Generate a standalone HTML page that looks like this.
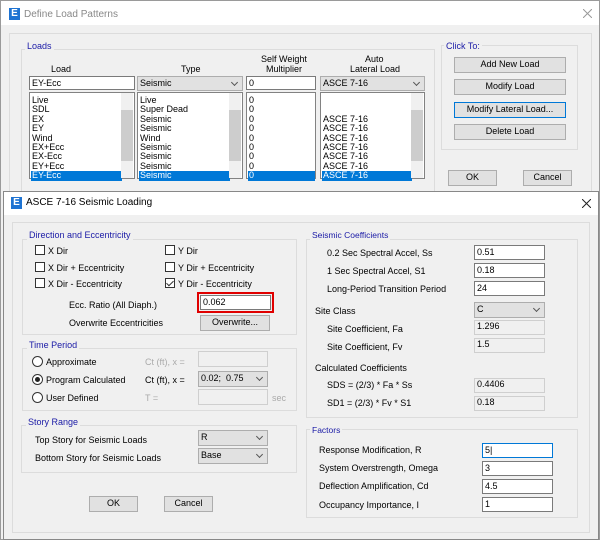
<!DOCTYPE html><html><head><style>
*{box-sizing:border-box;margin:0;padding:0}
body{width:600px;height:540px;overflow:hidden;background:#fff;font-family:"Liberation Sans",Arial,sans-serif;font-size:9px;color:#000;position:relative}
div,span{position:absolute}
svg{position:absolute}
.t{white-space:nowrap;line-height:10px}
.g{border:1px solid #dcdcdc}
.gl{background:#f0f0f0;color:#1a1aa6;padding:0 2px;line-height:10px}
.in{background:#fff;border:1px solid #7a7a7a;line-height:12px;padding-left:2px;white-space:nowrap}
.ro{background:#f0f0f0;border:1px solid #cfcfcf;line-height:10px;padding-left:2px}
.cb{background:#e1e1e1;border:1px solid #adadad;line-height:13px;padding-left:2px;white-space:nowrap}
.cb:after{content:"";position:absolute;right:5px;top:3px;width:4px;height:4px;border-right:1px solid #555;border-bottom:1px solid #555;transform:rotate(45deg)}
.btn{background:#e1e1e1;border:1px solid #adadad;text-align:center;line-height:13px;white-space:nowrap}
.chk{width:10px;height:10px;border:1px solid #333;background:#fff}
.rad{width:11px;height:11px;border:1px solid #333;border-radius:50%;background:#fff}
.lst{background:#fff;border:1px solid #828282}
.lst .t{left:2px;line-height:9.4px;position:relative;display:block}
.sb{width:12px;background:#f0f0f0}
.sel{background:#0078d7;color:#fff}
.icon{width:11px;height:12px;background:#1e73d2;color:#fff;font-weight:bold;font-size:10px;text-align:center;line-height:12px}
</style></head><body>
<div style="left:0;top:0;width:600px;height:540px;border:1px solid #9a9a9a;background:#f0f0f0"></div>
<div style="left:1px;top:1px;width:598px;height:24px;background:#fff"></div>
<div class="icon" style="left:9px;top:8px">E</div>
<div class="t" style="left:24px;top:10px;color:#888;font-size:10px">Define Load Patterns</div>
<svg style="left:583px;top:9px" width="9" height="9"><path d="M0 0L9 9M9 0L0 9" stroke="#999" stroke-width="1"/></svg>
<div class="g" style="left:9px;top:33px;width:583px;height:170px"></div>
<div class="g" style="left:21px;top:49px;width:414px;height:150px"></div>
<div class="t gl" style="left:25px;top:41px">Loads</div>
<div class="t" style="left:51px;top:64px">Load</div>
<div class="t" style="left:181px;top:64px">Type</div>
<div class="t" style="left:261px;top:54px">Self Weight</div>
<div class="t" style="left:266px;top:64px">Multiplier</div>
<div class="t" style="left:365px;top:54px">Auto</div>
<div class="t" style="left:350px;top:64px">Lateral Load</div>
<div class="in" style="left:29px;top:76px;width:106px;height:14px">EY-Ecc</div>
<div class="cb" style="left:137px;top:76px;width:106px;height:15px">Seismic</div>
<div class="in" style="left:246px;top:76px;width:70px;height:14px">0</div>
<div class="cb" style="left:320px;top:76px;width:105px;height:15px">ASCE 7-16</div>
<div class="lst" style="left:29px;top:92px;width:106px;height:87px;padding-top:3px">
<span class="t">Live</span><span class="t">SDL</span><span class="t">EX</span><span class="t">EY</span><span class="t">Wind</span><span class="t">EX+Ecc</span><span class="t">EX-Ecc</span><span class="t">EY+Ecc</span><span class="t sel" style="left:1px;width:91px;padding-left:1px">EY-Ecc</span>
<span class="sb" style="right:1px;top:0;height:85px"><span style="left:0;top:17px;width:12px;height:51px;background:#cdcdcd"></span></span></div>
<div class="lst" style="left:137px;top:92px;width:106px;height:87px;padding-top:3px">
<span class="t">Live</span><span class="t">Super Dead</span><span class="t">Seismic</span><span class="t">Seismic</span><span class="t">Wind</span><span class="t">Seismic</span><span class="t">Seismic</span><span class="t">Seismic</span><span class="t sel" style="left:1px;width:91px;padding-left:1px">Seismic</span>
<span class="sb" style="right:1px;top:0;height:85px"><span style="left:0;top:17px;width:12px;height:51px;background:#cdcdcd"></span></span></div>
<div class="lst" style="left:246px;top:92px;width:70px;height:87px;padding-top:3px">
<span class="t">0</span><span class="t">0</span><span class="t">0</span><span class="t">0</span><span class="t">0</span><span class="t">0</span><span class="t">0</span><span class="t">0</span><span class="t sel" style="left:1px;width:67px;padding-left:1px">0</span></div>
<div class="lst" style="left:320px;top:92px;width:105px;height:87px;padding-top:3px">
<span class="t">&nbsp;</span><span class="t">&nbsp;</span><span class="t">ASCE 7-16</span><span class="t">ASCE 7-16</span><span class="t">ASCE 7-16</span><span class="t">ASCE 7-16</span><span class="t">ASCE 7-16</span><span class="t">ASCE 7-16</span><span class="t sel" style="left:1px;width:90px;padding-left:1px">ASCE 7-16</span>
<span class="sb" style="right:1px;top:0;height:85px"><span style="left:0;top:17px;width:12px;height:51px;background:#cdcdcd"></span></span></div>
<div class="g" style="left:441px;top:45px;width:137px;height:105px"></div>
<div class="t gl" style="left:444px;top:41px">Click To:</div>
<div class="btn" style="left:454px;top:57px;width:112px;height:16px">Add New Load</div>
<div class="btn" style="left:454px;top:79px;width:112px;height:16px">Modify Load</div>
<div class="btn" style="left:454px;top:102px;width:112px;height:16px;border:1px solid #0078d7">Modify Lateral Load...</div>
<div class="btn" style="left:454px;top:124px;width:112px;height:16px">Delete Load</div>
<div class="btn" style="left:448px;top:170px;width:49px;height:16px">OK</div>
<div class="btn" style="left:523px;top:170px;width:49px;height:16px">Cancel</div>

<div style="left:3px;top:191px;width:596px;height:349px;background:#f0f0f0;border:1px solid #888"></div>
<div style="left:4px;top:192px;width:594px;height:23px;background:#fff"></div>
<div class="icon" style="left:11px;top:197px">E</div>
<div class="t" style="left:26px;top:198px;font-size:10px">ASCE 7-16 Seismic Loading</div>
<svg style="left:582px;top:199px" width="9" height="9"><path d="M0 0L9 9M9 0L0 9" stroke="#222" stroke-width="1"/></svg>
<div class="g" style="left:12px;top:222px;width:578px;height:311px"></div>

<div class="g" style="left:22px;top:239px;width:275px;height:96px"></div>
<div class="t gl" style="left:27px;top:230px">Direction and Eccentricity</div>
<div class="chk" style="left:35px;top:245px"></div><div class="t" style="left:48px;top:246px">X Dir</div>
<div class="chk" style="left:35px;top:262px"></div><div class="t" style="left:48px;top:263px">X Dir + Eccentricity</div>
<div class="chk" style="left:35px;top:278px"></div><div class="t" style="left:48px;top:279px">X Dir - Eccentricity</div>
<div class="chk" style="left:165px;top:245px"></div><div class="t" style="left:178px;top:246px">Y Dir</div>
<div class="chk" style="left:165px;top:262px"></div><div class="t" style="left:178px;top:263px">Y Dir + Eccentricity</div>
<div class="chk" style="left:165px;top:278px"><span style="left:2px;top:0;width:4px;height:7px;border-right:1px solid #333;border-bottom:1px solid #333;transform:rotate(45deg)"></span></div><div class="t" style="left:178px;top:279px">Y Dir - Eccentricity</div>
<div class="t" style="left:69px;top:300px">Ecc. Ratio (All Diaph.)</div>
<div style="left:197px;top:292px;width:77px;height:21px;border:2px solid #e00000"></div>
<div class="in" style="left:200px;top:295px;width:71px;height:15px;line-height:13px">0.062</div>
<div class="t" style="left:69px;top:318px">Overwrite Eccentricities</div>
<div class="btn" style="left:200px;top:315px;width:70px;height:16px">Overwrite...</div>

<div class="g" style="left:22px;top:348px;width:275px;height:63px"></div>
<div class="t gl" style="left:27px;top:340px">Time Period</div>
<div class="rad" style="left:32px;top:356px"></div><div class="t" style="left:46px;top:357px">Approximate</div>
<div class="rad" style="left:32px;top:374px"><span style="left:2px;top:2px;width:5px;height:5px;border-radius:50%;background:#222"></span></div><div class="t" style="left:46px;top:375px">Program Calculated</div>
<div class="rad" style="left:32px;top:392px"></div><div class="t" style="left:46px;top:393px">User Defined</div>
<div class="t" style="left:145px;top:357px;color:#aaa">Ct (ft), x =</div>
<div class="t" style="left:145px;top:375px">Ct (ft), x =</div>
<div class="t" style="left:145px;top:393px;color:#aaa">T =</div>
<div class="ro" style="left:198px;top:351px;width:70px;height:16px"></div>
<div class="cb" style="left:198px;top:371px;width:70px;height:16px">0.02;&nbsp; 0.75</div>
<div class="ro" style="left:198px;top:389px;width:70px;height:16px"></div>
<div class="t" style="left:272px;top:393px;color:#aaa">sec</div>

<div class="g" style="left:21px;top:425px;width:276px;height:48px"></div>
<div class="t gl" style="left:26px;top:417px">Story Range</div>
<div class="t" style="left:35px;top:435px">Top Story for Seismic Loads</div>
<div class="cb" style="left:198px;top:430px;width:70px;height:16px">R</div>
<div class="t" style="left:35px;top:453px">Bottom Story for Seismic Loads</div>
<div class="cb" style="left:198px;top:448px;width:70px;height:16px">Base</div>
<div class="btn" style="left:89px;top:496px;width:49px;height:16px">OK</div>
<div class="btn" style="left:164px;top:496px;width:49px;height:16px">Cancel</div>

<div class="g" style="left:306px;top:239px;width:272px;height:179px"></div>
<div class="t gl" style="left:310px;top:230px;font-size:8.5px">Seismic Coefficients</div>
<div class="t" style="left:327px;top:248px">0.2 Sec Spectral Accel, Ss</div>
<div class="in" style="left:474px;top:245px;width:71px;height:15px">0.51</div>
<div class="t" style="left:327px;top:266px">1 Sec Spectral Accel, S1</div>
<div class="in" style="left:474px;top:263px;width:71px;height:15px">0.18</div>
<div class="t" style="left:327px;top:284px">Long-Period Transition Period</div>
<div class="in" style="left:474px;top:281px;width:71px;height:15px">24</div>
<div class="t" style="left:315px;top:306px">Site Class</div>
<div class="cb" style="left:474px;top:302px;width:71px;height:16px">C</div>
<div class="t" style="left:327px;top:324px">Site Coefficient, Fa</div>
<div class="ro" style="left:474px;top:320px;width:71px;height:15px">1.296</div>
<div class="t" style="left:327px;top:342px">Site Coefficient, Fv</div>
<div class="ro" style="left:474px;top:338px;width:71px;height:15px">1.5</div>
<div class="t" style="left:315px;top:363px">Calculated Coefficients</div>
<div class="t" style="left:327px;top:380px">SDS = (2/3) * Fa * Ss</div>
<div class="ro" style="left:474px;top:378px;width:71px;height:15px">0.4406</div>
<div class="t" style="left:327px;top:398px">SD1 = (2/3) * Fv * S1</div>
<div class="ro" style="left:474px;top:396px;width:71px;height:15px">0.18</div>

<div class="g" style="left:306px;top:429px;width:272px;height:89px"></div>
<div class="t gl" style="left:310px;top:425px;font-size:8.5px">Factors</div>
<div class="t" style="left:319px;top:445px">Response Modification, R</div>
<div class="in" style="left:482px;top:443px;width:71px;height:15px;border-color:#0078d7">5|</div>
<div class="t" style="left:319px;top:463px">System Overstrength, Omega</div>
<div class="in" style="left:482px;top:461px;width:71px;height:15px">3</div>
<div class="t" style="left:319px;top:481px">Deflection Amplification, Cd</div>
<div class="in" style="left:482px;top:479px;width:71px;height:15px">4.5</div>
<div class="t" style="left:319px;top:500px">Occupancy Importance, I</div>
<div class="in" style="left:482px;top:497px;width:71px;height:15px">1</div>
</body></html>
